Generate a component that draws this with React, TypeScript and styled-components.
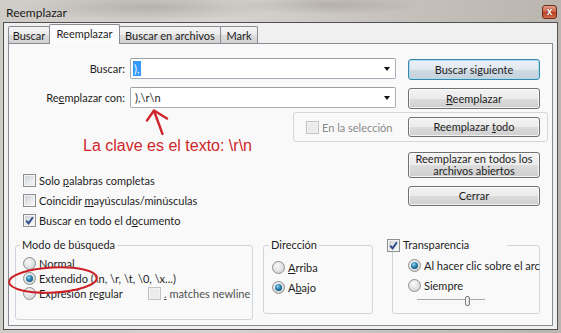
import styled, { createGlobalStyle } from "styled-components";

const GlobalStyle = createGlobalStyle`
  html, body { margin: 0; padding: 0; }
  body {
    width: 561px;
    height: 333px;
    overflow: hidden;
    font-family: Lato, "Noto Sans", "DejaVu Sans", sans-serif;
    font-size: 11px;
    color: #1e1e1e;
  }
  * { box-sizing: border-box; }
  u { text-underline-offset: 1px; }
`;

const CheckBox = ({ checked, disabled }: { checked?: boolean; disabled?: boolean }) => (
  <Box $disabled={disabled}>
    {checked && (
      <svg width="9" height="9" viewBox="0 0 9 9">
        <path d="M1.2 4.6 L3.6 7.4 L7.9 1.2" fill="none" stroke="#2f4a8a" strokeWidth="1.9" />
      </svg>
    )}
  </Box>
);

export default function App() {
  return (
    <>
      <GlobalStyle />
      <Window>
        <TitleBar>
          <Title>Reemplazar</Title>
          <CloseButton>x</CloseButton>
        </TitleBar>
        <Client>
          <Tabs>
            <Tab $w={42}>Buscar</Tab>
            <Tab $w={71} $active>
              Reemplazar
            </Tab>
            <Tab $w={102}>Buscar en archivos</Tab>
            <Tab $w={38}>Mark</Tab>
          </Tabs>
          <Panel>
            <FieldRow>
              <FieldLabel>Buscar:</FieldLabel>
              <Combo>
                <Selected>),</Selected>
                <DropArrow />
              </Combo>
              <Button $default $top={1}>
                <span>Buscar siguiente</span>
              </Button>
            </FieldRow>
            <FieldRow $gap={7}>
              <FieldLabel>
                Re<u>e</u>mplazar con:
              </FieldLabel>
              <Combo>
                <ComboText>{"),\\r\\n"}</ComboText>
                <DropArrow />
              </Combo>
              <Button $top={1}>
                <span>
                  <u>R</u>eemplazar
                </span>
              </Button>
            </FieldRow>
            <Middle>
              <LeftPane>
                <NoteArrow width="30" height="28" viewBox="0 0 30 28">
                  <path
                    d="M9 2 C11 7 12 10 13.5 14 S16 21 17.5 25"
                    fill="none"
                    stroke="#d0262b"
                    strokeWidth="2.4"
                    strokeLinecap="round"
                  />
                  <path
                    d="M2 11.5 L9 1.5 L22 9.5"
                    fill="none"
                    stroke="#d0262b"
                    strokeWidth="2.4"
                    strokeLinecap="round"
                    strokeLinejoin="round"
                  />
                </NoteArrow>
                <Note>{"La clave es el texto: \\r\\n"}</Note>
                <Options>
                  <Option>
                    <CheckBox />
                    <span>
                      Solo <u>p</u>alabras completas
                    </span>
                  </Option>
                  <Option>
                    <CheckBox />
                    <span>
                      Coincidir <u>m</u>ayúsculas/minúsculas
                    </span>
                  </Option>
                  <Option>
                    <CheckBox checked />
                    <span>
                      Buscar en todo el d<u>o</u>cumento
                    </span>
                  </Option>
                </Options>
              </LeftPane>
              <RightPane>
                <SelectionGroup>
                  <Option $disabled>
                    <CheckBox disabled />
                    <span>En la selección</span>
                  </Option>
                  <Button $h={20}>
                    <span>
                      Reemplazar <u>t</u>odo
                    </span>
                  </Button>
                </SelectionGroup>
                <Button $h={26} $left={115} $top={10}>
                  <span>
                    Reemplazar en todos los
                    <br />
                    archivos abiertos
                  </span>
                </Button>
                <Button $h={20} $left={115} $top={8}>
                  <span>Cerrar</span>
                </Button>
              </RightPane>
            </Middle>
            <Groups>
              <Group $w={238} $h={82}>
                <Legend $left={4}>Modo de búsqueda</Legend>
                <GroupBody $pad={4} $left={7}>
                  <Choice $h={15}>
                    <Radio />
                    <span>Normal</span>
                  </Choice>
                  <Choice $h={15}>
                    <Radio $on />
                    <span>{"Extendido (\\n, \\r, \\t, \\0, \\x...)"}</span>
                  </Choice>
                  <Choice $h={15}>
                    <Choice $h={15} $w={122}>
                      <Radio />
                      <span>
                        Expresión <u>r</u>egular
                      </span>
                    </Choice>
                    <Option $disabled>
                      <CheckBox disabled />
                      <Muted>
                        <u>.</u> matches newline
                      </Muted>
                    </Option>
                  </Choice>
                </GroupBody>
              </Group>
              <Group $w={110} $h={76} $gap={10}>
                <Legend $left={5}>Dirección</Legend>
                <GroupBody $pad={5} $left={8}>
                  <Choice $h={20}>
                    <Radio />
                    <span>
                      <u>A</u>rriba
                    </span>
                  </Choice>
                  <Choice $h={20}>
                    <Radio $on />
                    <span>
                      A<u>b</u>ajo
                    </span>
                  </Choice>
                </GroupBody>
              </Group>
              <Group $w={148} $h={76} $gap={19}>
                <Legend $left={-6} $w={120} $pad={0}>
                  <Option as="span">
                    <CheckBox checked />
                    <span>Transparencia</span>
                  </Option>
                </Legend>
                <GroupBody $pad={3} $left={15}>
                  <Choice $h={20}>
                    <Radio $on />
                    <span>Al hacer clic sobre el arc</span>
                  </Choice>
                  <Choice $h={20}>
                    <Radio />
                    <span>Siempre</span>
                  </Choice>
                  <Slider>
                    <Thumb />
                  </Slider>
                </GroupBody>
              </Group>
              <Circle width="96" height="34" viewBox="0 0 96 34">
                <ellipse
                  cx="47"
                  cy="16"
                  rx="44"
                  ry="12.5"
                  transform="rotate(-3 47 16)"
                  fill="none"
                  stroke="#cc2026"
                  strokeWidth="2"
                />
              </Circle>
            </Groups>
          </Panel>
        </Client>
      </Window>
    </>
  );
}

const Window = styled.div`
  width: 561px;
  height: 333px;
  display: flex;
  flex-direction: column;
  padding: 0 3px 3px 3px;
  background: radial-gradient(ellipse 130px 14px at 150px 7px, rgba(110, 104, 98, 0.3), transparent),
    radial-gradient(ellipse 90px 10px at 330px 5px, rgba(110, 104, 98, 0.25), transparent),
    linear-gradient(90deg, #cfcbc7 0%, #d6d3cf 40%, #c6c1bc 70%, #bbb5af 100%);
`;

const TitleBar = styled.div`
  height: 22px;
  flex: none;
  display: flex;
  align-items: flex-start;
  justify-content: space-between;
  padding: 0 1px 0 3px;
`;

const Title = styled.span`
  font-size: 12px;
  line-height: 14px;
  margin-top: 6px;
  color: #1a1a1a;
`;

const CloseButton = styled.div`
  width: 15px;
  height: 14px;
  margin-top: 5px;
  border: 1px solid #6e2a1b;
  border-radius: 3px;
  background: linear-gradient(#e3a08b, #cf6247 50%, #bb3b20 50%, #d2704f);
  color: #fff;
  display: grid;
  place-items: center;
  font: bold 10px/10px "Liberation Sans", sans-serif;
  text-shadow: 0 0 2px #5a1a0c;
`;

const Client = styled.div`
  flex: 1;
  display: flex;
  flex-direction: column;
  border: 1px solid #505050;
  background: #f0f0f0;
  padding: 1px 4px 3px 4px;
`;

const Tabs = styled.div`
  height: 19px;
  display: flex;
  align-items: flex-end;
  padding-left: 1px;
  position: relative;
  z-index: 1;
`;

const Tab = styled.div<{ $w: number; $active?: boolean }>`
  width: ${(p) => p.$w}px;
  height: ${(p) => (p.$active ? 20 : 17)}px;
  margin-bottom: ${(p) => (p.$active ? -1 : 0)}px;
  margin-left: -1px;
  border: 1px solid #898c95;
  border-bottom: none;
  border-radius: 2px 2px 0 0;
  display: flex;
  align-items: center;
  justify-content: center;
  padding-bottom: ${(p) => (p.$active ? 2 : 0)}px;
  background: ${(p) =>
    p.$active ? "#fbfbfb" : "linear-gradient(#f4f4f4, #ebebeb 50%, #dcdcdc 50%, #d2d2d2)"};
  position: relative;
  z-index: ${(p) => (p.$active ? 2 : 1)};
`;

const Panel = styled.div`
  flex: 1;
  border: 1px solid #898c95;
  background: #f9f9f9;
  padding-top: 14px;
`;

const FieldRow = styled.div<{ $gap?: number }>`
  display: flex;
  align-items: flex-start;
  margin-top: ${(p) => p.$gap ?? 0}px;
`;

const FieldLabel = styled.div`
  width: 116px;
  line-height: 21px;
  text-align: right;
`;

const Combo = styled.div`
  width: 266px;
  height: 21px;
  margin-left: 5px;
  border: 1px solid #a9afb8;
  border-top-color: #9aa0a8;
  border-radius: 2px;
  background: #fff;
  display: flex;
  align-items: center;
  padding-left: 2px;
`;

const Selected = styled.span`
  background: #3399ff;
  color: #fff;
  line-height: 15px;
  padding: 0 2px 0 1px;
`;

const ComboText = styled.span`
  padding-left: 2px;
`;

const DropArrow = styled.span`
  margin-left: auto;
  margin-right: 5px;
  width: 0;
  height: 0;
  border-left: 3.5px solid transparent;
  border-right: 3.5px solid transparent;
  border-top: 4px solid #111;
`;

const Button = styled.div<{ $default?: boolean; $h?: number; $top?: number; $left?: number }>`
  width: 132px;
  height: ${(p) => p.$h ?? 21}px;
  flex: none;
  margin-top: ${(p) => p.$top ?? 0}px;
  margin-left: ${(p) => (p.$left === undefined ? "12px" : `${p.$left}px`)};
  border: 1px solid ${(p) => (p.$default ? "#3d87ab" : "#707070")};
  border-radius: 3px;
  box-shadow: inset 0 0 0 1px ${(p) => (p.$default ? "#a8dcf0" : "rgba(255,255,255,0.75)")};
  background: ${(p) =>
    p.$default
      ? "linear-gradient(#edf2f5, #e0e8ee 50%, #cfdae2 50%, #c6d3dc)"
      : "linear-gradient(#f3f3f3, #ebebeb 50%, #dcdcdc 50%, #cfcfcf)"};
  display: flex;
  align-items: center;
  justify-content: center;
  text-align: center;
  line-height: 12px;
`;

const Middle = styled.div`
  display: flex;
  align-items: flex-start;
`;

const LeftPane = styled.div`
  width: 284px;
  display: flex;
  flex-direction: column;
`;

const NoteArrow = styled.svg`
  display: block;
  margin-left: 136px;
`;

const Note = styled.div`
  margin-left: 74px;
  font: 16px/18px "Liberation Sans", Arial, sans-serif;
  color: #d0262b;
  white-space: nowrap;
`;

const Options = styled.div`
  margin: 15px 0 0 14px;
  display: flex;
  flex-direction: column;
`;

const Option = styled.div<{ $disabled?: boolean }>`
  height: 20px;
  display: flex;
  align-items: center;
  gap: 3px;
  color: ${(p) => (p.$disabled ? "#8a8a8a" : "inherit")};
  white-space: nowrap;
`;

const Box = styled.span<{ $disabled?: boolean }>`
  width: 13px;
  height: 13px;
  flex: none;
  border: 1px solid ${(p) => (p.$disabled ? "#c2c2c2" : "#8e8f8f")};
  box-shadow: inset 0 0 0 1px ${(p) => (p.$disabled ? "#f2f2f2" : "#f4f4f4")};
  background: ${(p) =>
    p.$disabled ? "#ececec" : "linear-gradient(135deg, #c9cdd3, #eeeff0 70%, #f7f7f7)"};
  display: grid;
  place-items: center;
`;

const RightPane = styled.div`
  flex: 1;
  padding-right: 4px;
  display: flex;
  flex-direction: column;
  align-items: flex-start;
`;

const SelectionGroup = styled.div`
  width: 100%;
  height: 30px;
  margin-top: 3px;
  border: 1px solid #d3d7db;
  border-radius: 3px;
  display: flex;
  align-items: center;
  justify-content: space-between;
  padding: 0 7px 0 12px;
`;

const Groups = styled.div`
  position: relative;
  display: flex;
  align-items: flex-start;
  margin-top: 8px;
  padding-left: 6px;
`;

const Group = styled.fieldset<{ $w: number; $h: number; $gap?: number }>`
  width: ${(p) => p.$w}px;
  height: ${(p) => p.$h}px;
  margin: 0 0 0 ${(p) => p.$gap ?? 0}px;
  padding: 0;
  min-width: 0;
  border: 1px solid #d0d5d9;
  border-radius: 3px;
`;

const Legend = styled.legend<{ $left: number; $w?: number; $pad?: number }>`
  margin-left: ${(p) => p.$left}px;
  padding: 0 ${(p) => p.$pad ?? 2}px;
  width: ${(p) => (p.$w ? `${p.$w}px` : "auto")};
  height: 14px;
  line-height: 14px;
  display: flex;
  align-items: center;
`;

const GroupBody = styled.div<{ $pad: number; $left: number }>`
  display: flex;
  flex-direction: column;
  padding: ${(p) => p.$pad}px 0 0 ${(p) => p.$left}px;
`;

const Choice = styled.div<{ $h: number; $w?: number }>`
  height: ${(p) => p.$h}px;
  width: ${(p) => (p.$w ? `${p.$w}px` : "auto")};
  flex: none;
  display: flex;
  align-items: center;
  gap: 3px;
  white-space: nowrap;
`;

const Radio = styled.span<{ $on?: boolean }>`
  width: 13px;
  height: 13px;
  flex: none;
  border-radius: 50%;
  border: 1px solid #8e8f8f;
  background: radial-gradient(circle at 40% 35%, #fafafa, #d4d6d8 75%, #c2c4c6);
  display: grid;
  place-items: center;
  &::after {
    content: "";
    display: ${(p) => (p.$on ? "block" : "none")};
    width: 7px;
    height: 7px;
    border-radius: 50%;
    background: radial-gradient(circle at 40% 35%, #8fd6f2, #2a7fad 45%, #0f3b5c);
  }
`;

const Muted = styled.span`
  color: #505050;
`;

const Slider = styled.div`
  position: relative;
  width: 68px;
  height: 12px;
  margin-left: 9px;
  display: flex;
  align-items: center;
  &::before {
    content: "";
    width: 100%;
    height: 2px;
    border-top: 1px solid #a7a7a7;
    border-bottom: 1px solid #f4f4f4;
  }
`;

const Thumb = styled.span`
  position: absolute;
  left: 48px;
  top: 1px;
  width: 5px;
  height: 10px;
  border: 1px solid #7d7d7d;
  border-radius: 2px;
  background: linear-gradient(90deg, #fdfdfd, #dcdcdc);
`;

const Circle = styled.svg`
  position: absolute;
  left: -3px;
  top: 26px;
  overflow: visible;
  pointer-events: none;
`;
